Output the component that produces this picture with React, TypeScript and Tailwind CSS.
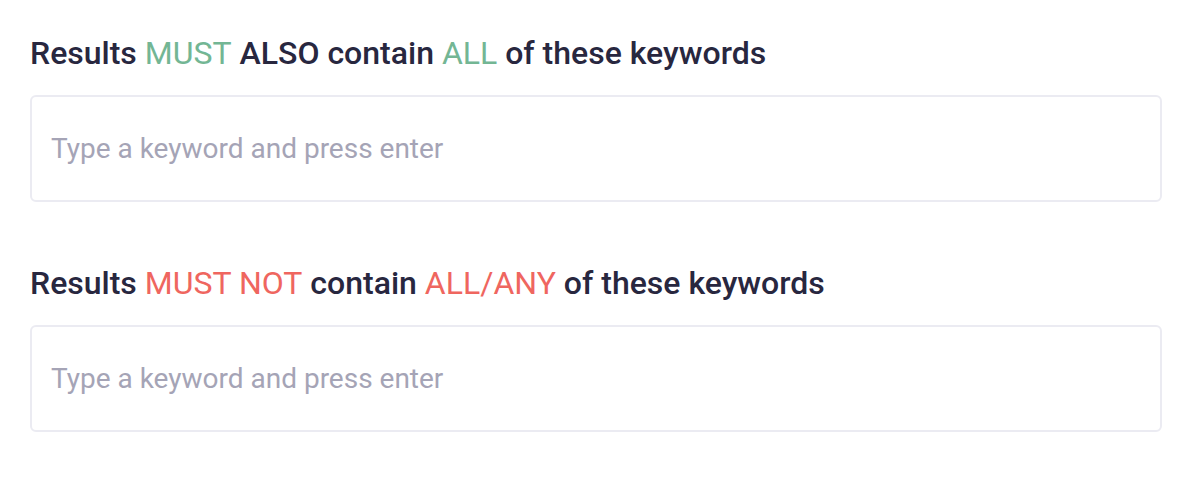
export default function App() {
  return (
    <div className="w-[1198px] h-[484px] bg-white pl-[30px] pr-[36px] pt-[33px] font-['Roboto',sans-serif]">
      <div className="flex flex-col gap-[61px]">
        <div>
          <h2 className="text-[32px] leading-[40px] font-medium text-[#28273f]">
            Results <span className="font-normal text-[#73b694]">MUST</span> ALSO contain{' '}
            <span className="font-normal text-[#73b694]">ALL</span> of these keywords
          </h2>
          <input
            type="text"
            placeholder="Type a keyword and press enter"
            className="mt-[22px] block w-full h-[107px] rounded-[6px] border-2 border-[#ebebf2] px-[19px] text-[28px] text-[#28273f] placeholder:text-[#a5a4b6] outline-none"
          />
        </div>
        <div>
          <h2 className="text-[32px] leading-[40px] font-medium text-[#28273f]">
            Results <span className="font-normal text-[#ef665f]">MUST NOT</span> contain{' '}
            <span className="font-normal text-[#ef665f]">ALL/ANY</span> of these keywords
          </h2>
          <input
            type="text"
            placeholder="Type a keyword and press enter"
            className="mt-[22px] block w-full h-[107px] rounded-[6px] border-2 border-[#ebebf2] px-[19px] text-[28px] text-[#28273f] placeholder:text-[#a5a4b6] outline-none"
          />
        </div>
      </div>
    </div>
  );
}
